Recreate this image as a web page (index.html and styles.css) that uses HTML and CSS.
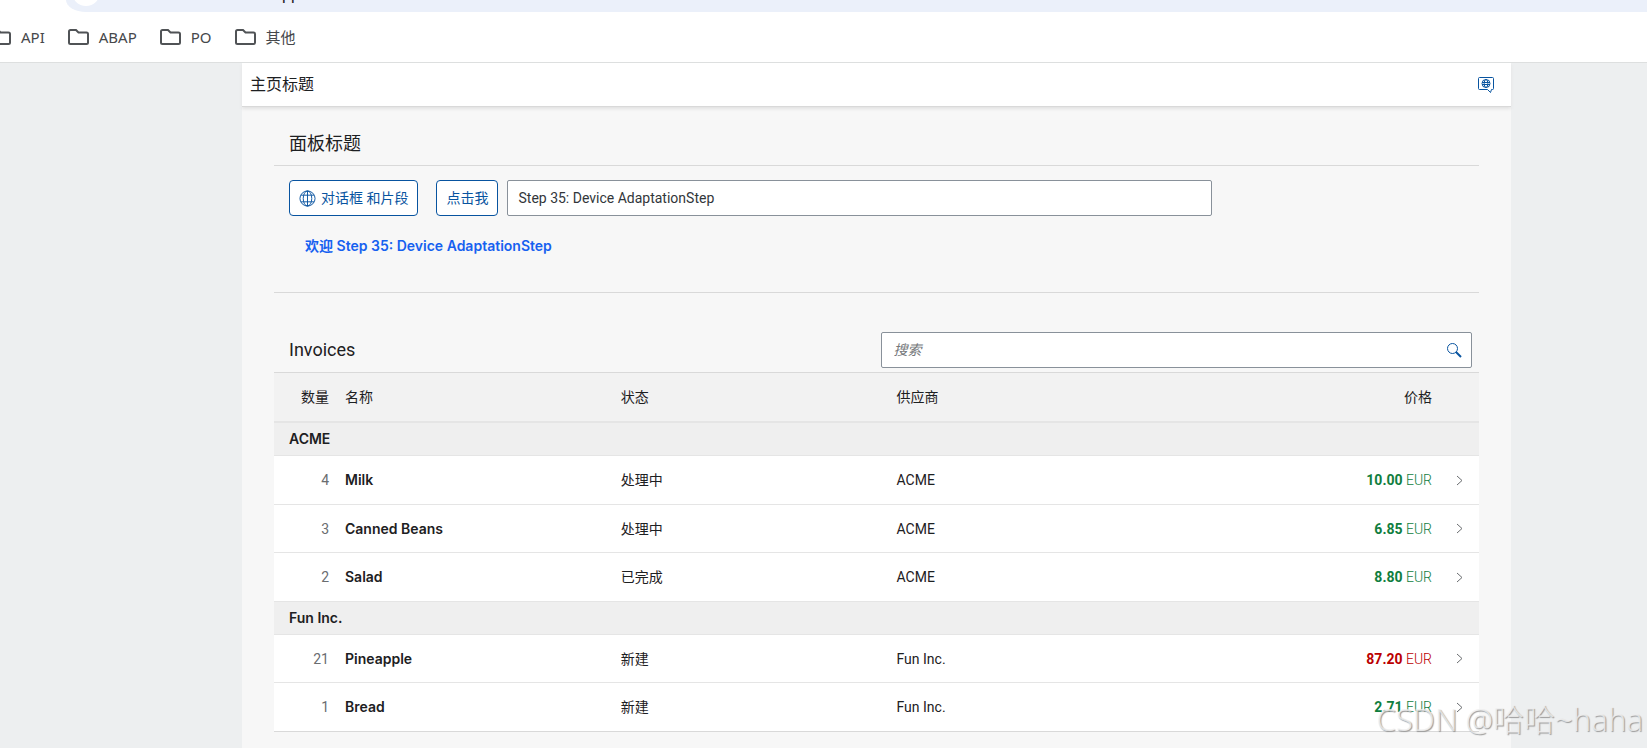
FILE: index.html
```html
<!DOCTYPE html>
<html lang="zh-CN">
<head>
<meta charset="utf-8">
<title>主页标题</title>
<link rel="stylesheet" href="styles.css">
</head>
<body>
<div class="chrome">
  <div class="address"><span class="site-chip"></span><span class="url">pp</span></div>
  <nav class="bookmarks">
    <a class="bookmark" href="#"><svg class="folder" viewBox="0 0 22 16"><path d="M1 3V13.5Q1 15 2.500 15H18.500Q20 15 20 13.500V5Q20 3.500 18.500 3.500H10.500L8 1H2.500Q1 1 1 2.500Z"/></svg>API</a>
    <a class="bookmark" href="#"><svg class="folder" viewBox="0 0 22 16"><path d="M1 3V13.5Q1 15 2.500 15H18.500Q20 15 20 13.500V5Q20 3.500 18.500 3.500H10.500L8 1H2.500Q1 1 1 2.500Z"/></svg>ABAP</a>
    <a class="bookmark" href="#"><svg class="folder" viewBox="0 0 22 16"><path d="M1 3V13.5Q1 15 2.500 15H18.500Q20 15 20 13.500V5Q20 3.500 18.500 3.500H10.500L8 1H2.500Q1 1 1 2.500Z"/></svg>PO</a>
    <a class="bookmark" href="#"><svg class="folder" viewBox="0 0 22 16"><path d="M1 3V13.5Q1 15 2.500 15H18.500Q20 15 20 13.500V5Q20 3.500 18.500 3.500H10.500L8 1H2.500Q1 1 1 2.500Z"/></svg>其他</a>
  </nav>
</div>
<div class="shell">
  <div class="app">
    <header class="app-header">
      <h1 class="app-title">主页标题</h1>
      <button class="icon-button" type="button" aria-label="对话框">
        <svg class="bubble" viewBox="0 0 18 18"><path d="M2.500 1.500H15.500Q16.500 1.500 16.500 2.500V12.500Q16.500 13.500 15.500 13.500H14.500L13.500 16.500L10.500 13.500H2.500Q1.500 13.500 1.500 12.500V2.500Q1.500 1.500 2.500 1.500Z"/><circle cx="9" cy="7.500" r="4"/><ellipse cx="9" cy="7.500" rx="1.800" ry="4"/><path d="M5 6.500H13M5 8.500H13"/></svg>
      </button>
    </header>
    <main class="content">
      <section class="panel">
        <h2 class="panel-title">面板标题</h2>
        <div class="panel-body">
          <div class="form-row">
            <button class="button button-dialog" type="button"><svg class="globe" viewBox="0 0 18 18"><circle cx="9" cy="9" r="8"/><ellipse cx="9" cy="9" rx="4.500" ry="8"/><path d="M9 1V17M2 5.500H16M2 12.500H16"/></svg>对话框 和片段</button>
            <button class="button" type="button">点击我</button>
            <input class="text-input" type="text" aria-label="名称" value="Step 35: Device AdaptationStep">
          </div>
          <p class="welcome">欢迎 Step 35: Device AdaptationStep</p>
        </div>
      </section>
      <section class="invoices">
        <div class="toolbar">
          <h2 class="toolbar-title">Invoices</h2>
          <form class="search">
            <input class="search-input" type="search" placeholder="搜索" aria-label="搜索">
            <button class="search-button" type="button" aria-label="搜索"><svg class="lens" viewBox="0 0 16 16"><circle cx="6.500" cy="6.500" r="5"/><path class="handle" d="M10 10L15 15"/></svg></button>
          </form>
        </div>
        <table class="table">
          <colgroup><col class="col-count"><col><col><col><col><col class="col-nav"></colgroup>
          <thead>
            <tr><th class="count">数量</th><th>名称</th><th>状态</th><th>供应商</th><th class="price">价格</th><th></th></tr>
          </thead>
          <tbody>
            <tr class="group"><th colspan="6">ACME</th></tr>
            <tr><td class="count">4</td><td class="name">Milk</td><td>处理中</td><td>ACME</td><td class="price good"><b>10.00</b> EUR</td><td class="nav"><svg class="chevron" viewBox="0 0 7 11"><path d="M1 1L6 5.500L1 10"/></svg></td></tr>
            <tr><td class="count">3</td><td class="name">Canned Beans</td><td>处理中</td><td>ACME</td><td class="price good"><b>6.85</b> EUR</td><td class="nav"><svg class="chevron" viewBox="0 0 7 11"><path d="M1 1L6 5.500L1 10"/></svg></td></tr>
            <tr><td class="count">2</td><td class="name">Salad</td><td>已完成</td><td>ACME</td><td class="price good"><b>8.80</b> EUR</td><td class="nav"><svg class="chevron" viewBox="0 0 7 11"><path d="M1 1L6 5.500L1 10"/></svg></td></tr>
            <tr class="group"><th colspan="6">Fun Inc.</th></tr>
            <tr><td class="count">21</td><td class="name">Pineapple</td><td>新建</td><td>Fun Inc.</td><td class="price bad"><b>87.20</b> EUR</td><td class="nav"><svg class="chevron" viewBox="0 0 7 11"><path d="M1 1L6 5.500L1 10"/></svg></td></tr>
            <tr><td class="count">1</td><td class="name">Bread</td><td>新建</td><td>Fun Inc.</td><td class="price good"><b>2.71</b> EUR</td><td class="nav"><svg class="chevron" viewBox="0 0 7 11"><path d="M1 1L6 5.500L1 10"/></svg></td></tr>
          </tbody>
        </table>
      </section>
    </main>
  </div>
</div>
<div class="watermark">CSDN @哈哈~haha</div>
</body>
</html>
```
FILE: styles.css
```css
* { box-sizing: border-box; }
html, body { height: 100%; }
body {
  margin: 0;
  display: flex;
  flex-direction: column;
  position: relative;
  overflow: hidden;
  background: #edeff0;
  color: #1d2022;
  font: 14px/20px Roboto, "Noto Sans CJK SC", sans-serif;
}
h1, h2, p { margin: 0; font-weight: 400; }
button, input { font: inherit; }
svg { fill: none; stroke: currentColor; flex: none; display: block; }

.chrome { background: #fff; border-bottom: 1px solid #dddfdf; }
.address {
  height: 12px;
  margin-left: 66px;
  display: flex;
  align-items: flex-end;
  overflow: hidden;
  background: #ebf0fa;
  border-bottom-left-radius: 20px 12px;
}
.site-chip { width: 28px; height: 28px; margin: 0 0 6px 6px; border-radius: 50%; background: #fff; }
.url { margin: 0 0 7px 182px; font-size: 16px; }
.bookmarks { display: flex; align-items: center; gap: 23px; height: 50px; margin-left: -10px; }
.bookmark {
  display: flex;
  align-items: center;
  gap: 9px;
  color: #46484b;
  text-decoration: none;
  font: 15px/20px "Noto Sans", "Noto Sans CJK SC", sans-serif;
}
.folder { width: 22px; height: 16px; stroke-width: 2; color: #505356; }

.shell { flex: 1; padding: 0 136px 0 242px; }
.app { height: 100%; background: #f7f7f7; }
.app-header {
  display: flex;
  align-items: center;
  justify-content: space-between;
  height: 44px;
  padding: 0 16px 0 8px;
  background: #fff;
  border-bottom: 1px solid #d9d9d9;
  box-shadow: 0 2px 3px #e2e2e2;
}
.app-title { font-size: 16px; line-height: 24px; }
.icon-button { padding: 0; border: 0; background: none; color: #0854a0; }
.bubble { width: 18px; height: 18px; }

.content { padding: 16px 32px; }
.panel { border-bottom: 1px solid #d9d9d9; }
.panel-title { padding: 8px 15px; font-size: 18px; line-height: 26px; border-bottom: 1px solid #d9d9d9; }
.panel-body { padding: 14px 15px 36px; }
.form-row { display: flex; }
.button {
  height: 36px;
  padding: 0 9px;
  display: flex;
  align-items: center;
  gap: 5px;
  color: #0854a0;
  background: #fff;
  border: 1px solid #0854a0;
  border-radius: 4px;
}
.button-dialog { margin-right: 18px; }
.globe { width: 17px; height: 17px; }
.text-input {
  width: 60%;
  height: 36px;
  margin-left: 9px;
  padding: 0 10px;
  color: #32363a;
  background: #fff;
  border: 1px solid #89919a;
  border-radius: 2px;
}
.welcome { margin: 20px 16px 0; color: #1661f0; }
.welcome, .name, .group th { font-family: Inter, "Noto Sans CJK SC", sans-serif; font-weight: 600; }

.invoices { margin-top: 32px; }
.toolbar { display: flex; align-items: center; justify-content: space-between; height: 47px; padding: 3px 7px 0 15px; }
.toolbar-title { font-size: 18px; line-height: 26px; }
.search {
  display: flex;
  align-items: center;
  width: 50%;
  height: 36px;
  padding: 0 9px 0 12px;
  background: #fff;
  border: 1px solid #89919a;
  border-radius: 2px;
}
.search-input { flex: 1; min-width: 0; padding: 0; border: 0; outline: 0; background: none; }
.search-input::placeholder { color: #74777a; font-style: italic; }
.search-button { padding: 0; border: 0; background: none; color: #0854a0; }
.lens { width: 16px; height: 16px; }
.handle { stroke-width: 2; }

.table { width: 100%; table-layout: fixed; border-collapse: separate; border-spacing: 0; border-top: 1px solid #d9d9d9; border-bottom: 1px solid #d9d9d9; }
.col-count { width: 63px; }
.col-nav { width: 39px; }
th, td { padding: 0 8px; text-align: left; vertical-align: middle; }
thead th { height: 50px; background: #f2f2f2; border-bottom: 2px solid #e5e5e5; font-weight: 400; }
td { height: 49px; background: #fff; border-bottom: 1px solid #e5e5e5; }
tr:nth-child(3n) td { height: 48px; }
tr:last-child td { border-bottom: 0; height: 48px; }
.group th { height: 33px; padding: 0 15px; background: #efefef; border-bottom: 1px solid #e5e5e5; }
.count, .price { text-align: right; }
td.count { color: #6a6d70; }
.good { color: #107e3e; }
.bad { color: #b00; }
.price.good, .price.bad { font-weight: 300; }
.price b { font-weight: 700; }
.nav { padding: 0 16px; color: #6a6d70; }
.chevron { width: 7px; height: 11px; }

.watermark {
  position: absolute;
  right: 4px;
  bottom: 7px;
  color: rgba(240, 240, 240, 0.8);
  font: 300 31px/44px "Noto Sans", "Noto Sans CJK SC", sans-serif;
  text-shadow: 1px 1px 1px #999;
}
```
